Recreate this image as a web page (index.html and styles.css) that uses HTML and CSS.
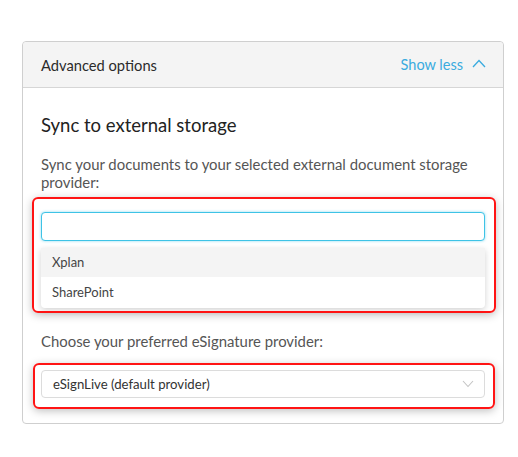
FILE: index.html
```html
<!DOCTYPE html>
<html>
<head>
<meta charset="utf-8">
<link rel="stylesheet" href="styles.css">
</head>
<body>
<div class="card">
  <div class="card-header">
    <span class="header-title">Advanced options</span>
    <span class="toggle">Show less
      <svg class="chev-up" width="14" height="9" viewBox="0 0 14 9"><path d="M1 8 L7 1.5 L13 8" fill="none" stroke="#3aabdf" stroke-width="1.3"/></svg>
    </span>
  </div>
  <div class="card-body">
    <h2 class="section-title">Sync to external storage</h2>
    <p class="desc">Sync your documents to your selected external document storage provider:</p>
    <div class="field field-sync">
      <div class="input focused"></div>
      <ul class="menu">
        <li class="menu-item active">Xplan</li>
        <li class="menu-item">SharePoint</li>
      </ul>
      <div class="highlight hl-1"></div>
    </div>
    <p class="desc hidden-line">Choose your storage provider for syncing</p>
    <p class="desc label">Choose your preferred eSignature provider:</p>
    <div class="field field-sign">
      <div class="select">
        <span>eSignLive (default provider)</span>
        <svg class="chev-down" width="12" height="8" viewBox="0 0 12 8"><path d="M1 1 L6 6.5 L11 1" fill="none" stroke="#c4c4c4" stroke-width="1.1"/></svg>
      </div>
      <div class="highlight hl-2"></div>
    </div>
  </div>
</div>
</body>
</html>
```

FILE: styles.css
```css
* { box-sizing: border-box; }
body {
  margin: 0;
  background: #fff;
  font-family: "Lato", "Open Sans", sans-serif;
  color: #333;
}
.card {
  margin: 41px 0 0 22px;
  width: 482px;
  height: 383px;
  border: 1px solid #cfcfcf;
  border-radius: 4px;
}
.card-header {
  height: 46px;
  background: #f4f4f4;
  border-bottom: 1px solid #d6d6d6;
  border-radius: 4px 4px 0 0;
  display: flex;
  align-items: center;
  justify-content: space-between;
  padding: 0 17px 0 18px;
}
.header-title {
  font-size: 14.7px;
  color: #2b2b2b;
}
.toggle {
  display: flex;
  align-items: center;
  gap: 9px;
  font-size: 14.5px;
  color: #3aabdf;
}
.chev-up { display: block; margin-top: -2px; }
.card-body {
  padding: 25px 18px 0 18px;
}
.section-title {
  margin: 0;
  font-weight: 400;
  font-size: 18.5px;
  line-height: 24px;
  color: #222;
}
.desc {
  margin: 18px 0 0 0;
  font-size: 14.9px;
  line-height: 18px;
  color: #555;
}
.field {
  position: relative;
}
.field-sync { margin-top: 21px; }
.field-sign { margin-top: 20px; }
.input {
  height: 29px;
  border: 1px solid #3ec3e6;
  border-radius: 4px;
  background: #fff;
  box-shadow: 0 0 3px rgba(62, 195, 230, 0.6);
}
.menu {
  position: absolute;
  left: 0;
  right: 0;
  top: 36px;
  margin: 0;
  padding: 0;
  list-style: none;
  background: #fff;
  border-radius: 0 0 4px 4px;
  box-shadow: 0 2px 6px rgba(0, 0, 0, 0.18);
  z-index: 2;
}
.menu-item {
  height: 31px;
  line-height: 30px;
  padding-left: 11px;
  font-size: 13px;
  color: #444;
}
.menu-item.active {
  background: #f4f4f4;
  height: 29px;
  line-height: 29px;
}
.highlight {
  position: absolute;
  border: 2px solid #ff1414;
  border-radius: 6px;
  box-shadow: 0 2px 8px rgba(0, 0, 0, 0.25);
  z-index: 3;
  pointer-events: none;
}
.hl-1 {
  left: -9px;
  right: -11px;
  top: -15px;
  height: 116px;
}
.hl-2 {
  left: -8px;
  right: -10px;
  top: -7px;
  height: 46px;
}
.hidden-line {
  margin-top: 49px;
  padding-left: 60px;
  color: #333;
}
.label {
  margin-top: 24px;
}
.select {
  height: 28px;
  border: 1px solid #dcdcdc;
  border-radius: 4px;
  display: flex;
  align-items: center;
  justify-content: space-between;
  padding: 0 10px 0 11px;
  font-size: 13.2px;
  color: #333;
}
.chev-down { display: block; }
```
